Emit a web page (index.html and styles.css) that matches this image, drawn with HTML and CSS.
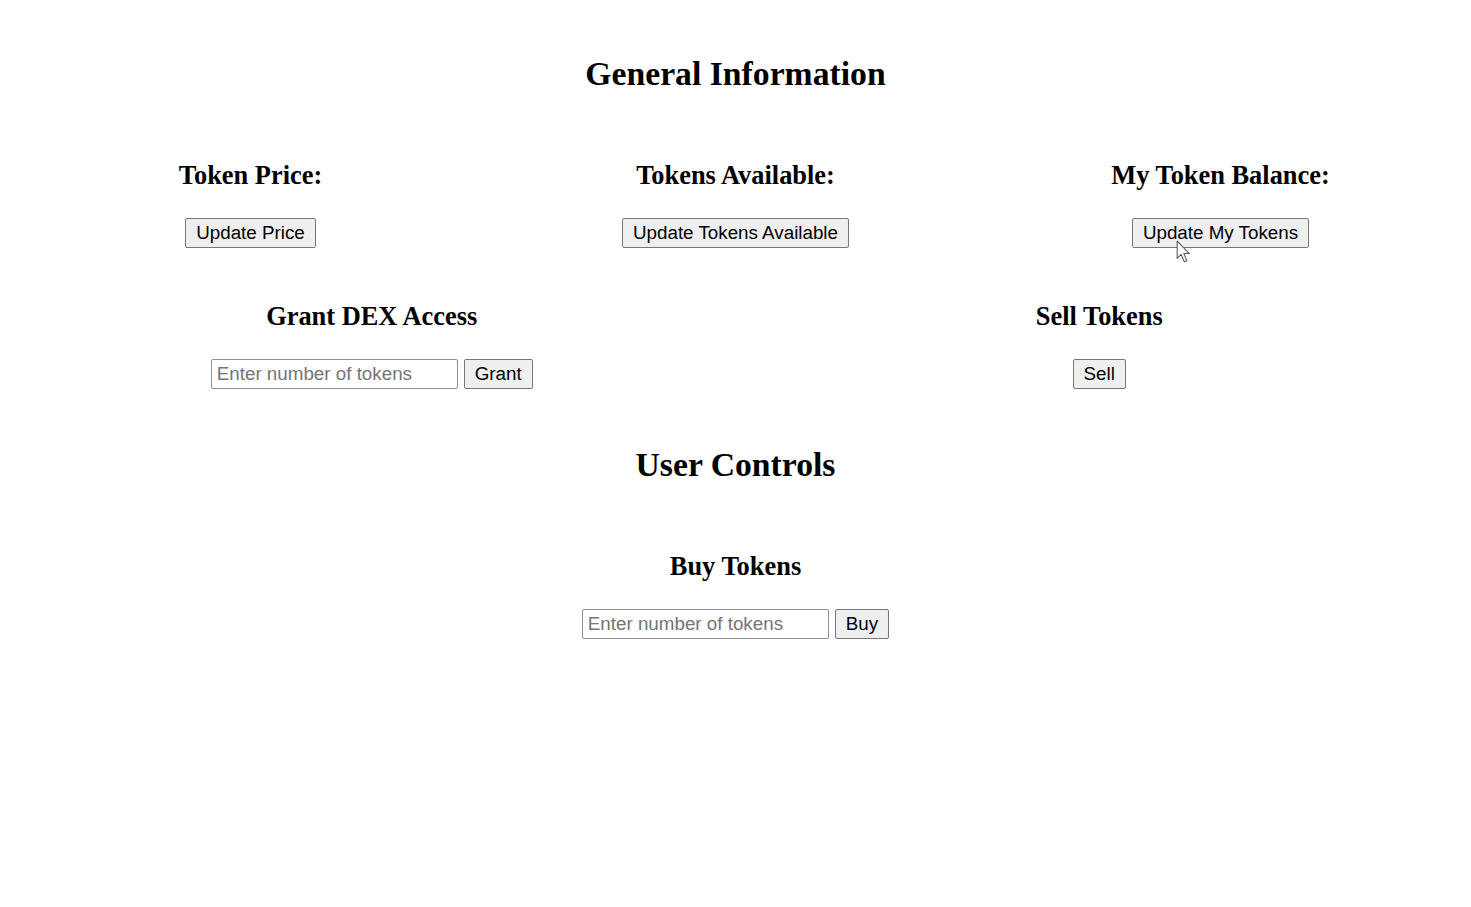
FILE: index.html
```html
<!DOCTYPE html>
<html lang="en">
<head>
<meta charset="utf-8">
<title>Token DEX</title>
<link rel="stylesheet" href="styles.css">
</head>
<body>
<main class="page">
  <h1 class="title title-general">General Information</h1>
  <section class="row row-three">
    <div class="col">
      <h2 class="heading">Token Price:</h2>
      <div class="controls"><button class="btn">Update Price</button></div>
    </div>
    <div class="col">
      <h2 class="heading">Tokens Available:</h2>
      <div class="controls"><button class="btn">Update Tokens Available</button></div>
    </div>
    <div class="col">
      <h2 class="heading">My Token Balance:</h2>
      <div class="controls cursor-host">
        <button class="btn">Update My Tokens</button>
        <svg class="cursor" width="15" height="23" viewBox="0 0 13 20" aria-hidden="true">
          <path d="M1 1 L1 16 L4.5 12.6 L7.2 19 L9.4 18 L6.8 11.8 L11.6 11.8 Z" fill="#fff" stroke="#555" stroke-width="0.9" stroke-linejoin="round"/>
        </svg>
      </div>
    </div>
  </section>
  <section class="row row-two">
    <div class="col">
      <h2 class="heading">Grant DEX Access</h2>
      <div class="controls"><input class="field" type="text" placeholder="Enter number of tokens"><button class="btn">Grant</button></div>
    </div>
    <div class="col">
      <h2 class="heading">Sell Tokens</h2>
      <div class="controls"><button class="btn">Sell</button></div>
    </div>
  </section>
  <h1 class="title title-user">User Controls</h1>
  <section class="row row-one">
    <div class="col">
      <h2 class="heading">Buy Tokens</h2>
      <div class="controls"><input class="field" type="text" placeholder="Enter number of tokens"><button class="btn">Buy</button></div>
    </div>
  </section>
</main>
</body>
</html>
```

FILE: styles.css
```css
html, body {
  background: #ffffff;
}

body {
  margin: 0;
  padding: 0 8px;
  font-family: "Liberation Serif", "Times New Roman", serif;
  color: #000;
}

.page {
  display: flex;
  flex-direction: column;
}

.title {
  margin: 0;
  text-align: center;
  font-size: 33.7px;
  line-height: 39px;
  font-weight: bold;
}

.title-general {
  margin-top: 54px;
}

.title-user {
  margin-top: 56px;
}

.row {
  display: grid;
}

.row-three {
  grid-template-columns: repeat(3, 1fr);
  margin-top: 68px;
}

.row-two {
  grid-template-columns: repeat(2, 1fr);
  margin-top: 54px;
}

.row-one {
  grid-template-columns: 1fr;
  margin-top: 68px;
}

.col {
  display: flex;
  flex-direction: column;
  align-items: center;
}

.heading {
  margin: 0;
  font-size: 26.4px;
  line-height: 29px;
  font-weight: bold;
  text-align: center;
}

.controls {
  margin-top: 28px;
  display: flex;
  align-items: center;
  gap: 6px;
}

.cursor-host {
  position: relative;
}

.cursor {
  position: absolute;
  left: 44px;
  top: 22px;
}

.btn {
  font-family: "Liberation Sans", Arial, sans-serif;
  font-size: 18.8px;
  height: 30px;
  padding: 0 10px;
  background: #efefef;
  color: #000;
  border: 1px solid #767676;
  border-radius: 2px;
  line-height: 1;
}

.field {
  font-family: "Liberation Sans", Arial, sans-serif;
  font-size: 18.8px;
  width: 247px;
  height: 30px;
  box-sizing: border-box;
  padding: 0 5px;
  border: 1px solid #8f8f8f;
  border-radius: 2px;
  background: #fff;
  color: #000;
}

.field::placeholder {
  color: #757575;
}
```
